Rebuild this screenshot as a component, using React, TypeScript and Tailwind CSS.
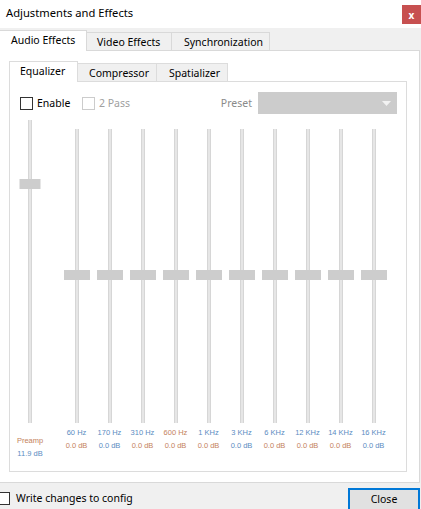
import { useState } from 'react';

const BLUE = 'text-[#5b8cc2]';
const ORANGE = 'text-[#c4825c]';

const bands = [
    { freq: '60 Hz', freqColor: BLUE, dbColor: ORANGE },
    { freq: '170 Hz', freqColor: BLUE, dbColor: BLUE },
    { freq: '310 Hz', freqColor: BLUE, dbColor: ORANGE },
    { freq: '600 Hz', freqColor: ORANGE, dbColor: ORANGE },
    { freq: '1 KHz', freqColor: BLUE, dbColor: ORANGE },
    { freq: '3 KHz', freqColor: BLUE, dbColor: BLUE },
    { freq: '6 KHz', freqColor: BLUE, dbColor: ORANGE },
    { freq: '12 KHz', freqColor: BLUE, dbColor: ORANGE },
    { freq: '14 KHz', freqColor: BLUE, dbColor: ORANGE },
    { freq: '16 KHz', freqColor: BLUE, dbColor: BLUE },
];

const Checkbox = ({ checked, disabled, onClick }: { checked?: boolean; disabled?: boolean; onClick?: () => void }) => (
    <span
        onClick={onClick}
        className={`w-[13px] h-[13px] shrink-0 border bg-white flex items-center justify-center ${disabled ? 'border-[#cccccc]' : 'border-[#333333]'}`}
    >
        {checked && (
            <svg width="9" height="9" viewBox="0 0 9 9">
                <path d="M1 4.5 L3.5 7 L8 1.5" stroke="#333" strokeWidth="1.4" fill="none" />
            </svg>
        )}
    </span>
);

export default function App() {
    const [enabled, setEnabled] = useState(false);
    const [writeConfig, setWriteConfig] = useState(false);

    return (
        <div className="w-[421px] h-[509px] bg-[#f0f0f0] overflow-hidden text-black font-['Noto_Sans','Liberation_Sans',sans-serif]">
            {/* title bar */}
            <div className="h-[28px] bg-white flex items-start justify-between">
                <span className="pl-[6px] pt-[4px] text-[11.2px] leading-[18px]">Adjustments and Effects</span>
                <button className="mt-[5px] w-[19px] h-[19px] bg-[#c75050] text-white text-[10px] font-bold leading-none flex items-center justify-center">
                    x
                </button>
            </div>

            {/* outer tabs */}
            <div className="h-[22px] flex items-end">
                <div className="relative z-10 w-[88px] h-[21px] mb-[-1px] ml-[-1px] bg-white border-x border-t border-[#d9d9d9] pl-[11px] text-[10.5px] leading-[19px]">
                    Audio Effects
                </div>
                <div className="w-[86px] h-[18px] ml-[-1px] border-x border-t border-[#d9d9d9] pl-[10px] text-[10.5px] leading-[18px]">
                    Video Effects
                </div>
                <div className="w-[99px] h-[18px] ml-[-1px] border-x border-t border-[#d9d9d9] pl-[12px] text-[10.5px] leading-[18px]">
                    Synchronization
                </div>
            </div>

            {/* outer panel */}
            <div className="w-[421px] h-[433px] ml-[-1px] bg-white border border-[#d9d9d9]">
                {/* inner tabs */}
                <div className="mt-[9px] h-[21px] flex items-end pl-[9px]">
                    <div className="relative z-10 w-[69px] h-[21px] mb-[-1px] bg-white border-x border-t border-[#dcdcdc] pl-[10px] text-[10.5px] leading-[19px]">
                        Equalizer
                    </div>
                    <div className="w-[80px] h-[18px] ml-[-1px] bg-[#f0f0f0] border-x border-t border-[#dcdcdc] pl-[11px] text-[10.5px] leading-[18px]">
                        Compressor
                    </div>
                    <div className="w-[72px] h-[18px] ml-[-1px] bg-[#f0f0f0] border-x border-t border-[#dcdcdc] pl-[12px] text-[10.5px] leading-[18px]">
                        Spatializer
                    </div>
                </div>

                {/* inner panel */}
                <div className="ml-[9px] w-[398px] h-[391px] border border-[#dcdcdc]">
                    <div className="mt-[10px] h-[22px] flex items-center pl-[10px] pr-[9px]">
                        <div className="w-[62px] flex items-center gap-[4px] cursor-default" onClick={() => setEnabled(!enabled)}>
                            <Checkbox checked={enabled} />
                            <span className="text-[10.5px] leading-[14px]">Enable</span>
                        </div>
                        <div className="flex items-center gap-[4px]">
                            <Checkbox disabled />
                            <span className="text-[10.5px] leading-[14px] text-[#a0a0a0]">2 Pass</span>
                        </div>
                        <span className="ml-auto text-[10.5px] leading-[14px] text-[#8a8a8a]">Preset</span>
                        <div className="ml-[6px] w-[139px] h-[22px] bg-[#cccccc] flex items-center justify-end pr-[6px]">
                            <svg width="9" height="5" viewBox="0 0 9 5">
                                <path d="M0 0 H9 L4.5 5 Z" fill="#f2f2f2" />
                            </svg>
                        </div>
                    </div>

                    {/* sliders */}
                    <div className="mt-[6px] flex items-start pl-[7px] font-['Liberation_Sans',sans-serif] text-[7.5px]">
                        <div className="w-[26px] flex flex-col items-center">
                            <div className="relative w-[4px] h-[303px] bg-[#e6e6e6] border-x border-[#d6d6d6]">
                                <div className="absolute top-[59px] left-1/2 -translate-x-1/2 w-[21px] h-[10px] bg-[#cdcdcd]" />
                            </div>
                            <span className={`mt-[11px] leading-[13px] ${ORANGE}`}>Preamp</span>
                            <span className={`leading-[13px] ${BLUE}`}>11.9 dB</span>
                        </div>
                        <div className="ml-[17px] flex">
                            {bands.map((b) => (
                                <div key={b.freq} className="w-[33px] mt-[9px] flex flex-col items-center">
                                    <div className="relative w-[4px] h-[294px] bg-[#e6e6e6] border-x border-[#d6d6d6]">
                                        <div className="absolute top-[141px] left-1/2 -translate-x-1/2 w-[26px] h-[10px] bg-[#cdcdcd]" />
                                    </div>
                                    <span className={`mt-[3px] leading-[13px] whitespace-nowrap ${b.freqColor}`}>{b.freq}</span>
                                    <span className={`leading-[13px] whitespace-nowrap ${b.dbColor}`}>0.0 dB</span>
                                </div>
                            ))}
                        </div>
                    </div>
                </div>
            </div>

            {/* footer */}
            <div className="flex items-start">
                <div className="mt-[8px] ml-[-3px] flex items-center gap-[6px] cursor-default" onClick={() => setWriteConfig(!writeConfig)}>
                    <Checkbox checked={writeConfig} />
                    <span className="text-[10.5px] leading-[14px]">Write changes to config</span>
                </div>
                <button className="ml-auto mr-[1px] mt-[5px] w-[72px] h-[23px] bg-[#e1e1e1] border-2 border-[#0078d7] text-[10.5px] leading-[17px]">
                    Close
                </button>
            </div>
        </div>
    );
}
